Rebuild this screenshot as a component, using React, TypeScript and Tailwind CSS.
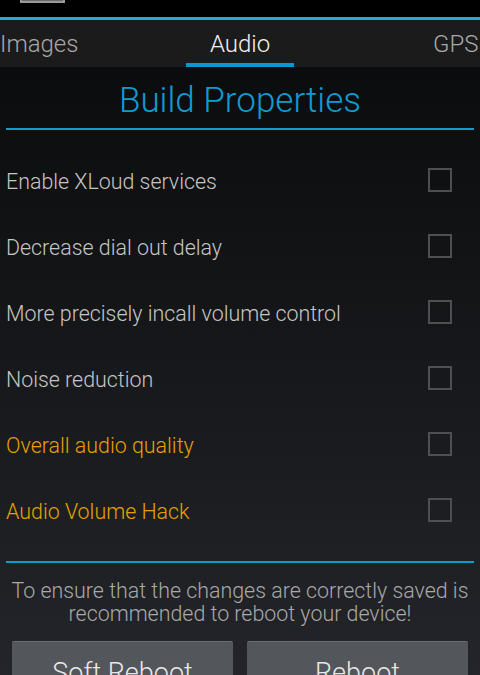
import React from 'react';

const rows = [
  { label: 'Enable XLoud services', warn: false },
  { label: 'Decrease dial out delay', warn: false },
  { label: 'More precisely incall volume control', warn: false },
  { label: 'Noise reduction', warn: false },
  { label: 'Overall audio quality', warn: true },
  { label: 'Audio Volume Hack', warn: true },
];

export default function App() {
  return (
    <div
      className="w-[480px] h-[675px] overflow-hidden bg-black font-light"
      style={{ fontFamily: 'Roboto, "Noto Sans", sans-serif' }}
    >
      {/* status / action bar remnant */}
      <div className="h-[17px] bg-black relative">
        <div className="absolute left-[20px] top-[-10px] w-[45px] h-[13px] border-2 border-[#9a9a9a] bg-[#6a6a6a]" />
      </div>
      <div className="h-[3px] bg-[#2aa8d8]" />

      {/* tabs */}
      <div className="h-[47px] bg-[#1c1b1c] relative text-[24px] leading-[30px]">
        <span className="absolute left-0 top-[9px] text-[#a8a8a8]">Images</span>
        <div className="absolute left-[186px] w-[108px] top-0 h-full flex flex-col items-center">
          <span className="mt-[9px] text-[#f2f2f2]">Audio</span>
          <div className="mt-auto w-full h-[4px] bg-[#0a99cc]" />
        </div>
        <span className="absolute left-[433px] top-[9px] text-[#a8a8a8]">GPS</span>
      </div>

      <div className="h-[608px] bg-gradient-to-b from-[#0b0c0d] to-[#23252a] px-[6px]">
        <h1 className="text-center text-[35px] text-[#0f9bd1] pt-[14px] h-[61px] leading-[40px]">
          Build Properties
        </h1>
        <div className="h-[2px] bg-[#0f9bd1]" />

        <div className="pt-[18px]">
          {rows.map((r) => (
            <div key={r.label} className="h-[66px] flex items-center justify-between pr-[22px]">
              <span className={`text-[21.4px] pt-[2px] ${r.warn ? 'text-[#e6a100]' : 'text-[#c6c6c6]'}`}>{r.label}</span>
              <div className="w-[24px] h-[24px] border-2 border-[#4e4f51] -mt-[2px]" />
            </div>
          ))}
        </div>

        <div className="h-[2px] bg-[#0f9bd1] mt-[17px]" />
        <p className="text-center text-[21.4px] leading-[23px] text-[#a9a9a9] mt-[16px] whitespace-nowrap">
          To ensure that the changes are correctly saved is
          <br />
          recommended to reboot your device!
        </p>

        <div className="flex gap-[14px] px-[6px] mt-[16px]">
          <button className="flex-1 h-[60px] bg-[#53565a] border-t border-[#6a6d71] text-[#e8e8e8] text-[27px] pt-[4px] rounded-[2px]">
            Soft Reboot
          </button>
          <button className="flex-1 h-[60px] bg-[#53565a] border-t border-[#6a6d71] text-[#e8e8e8] text-[27px] pt-[4px] rounded-[2px]">
            Reboot
          </button>
        </div>
      </div>
    </div>
  );
}
